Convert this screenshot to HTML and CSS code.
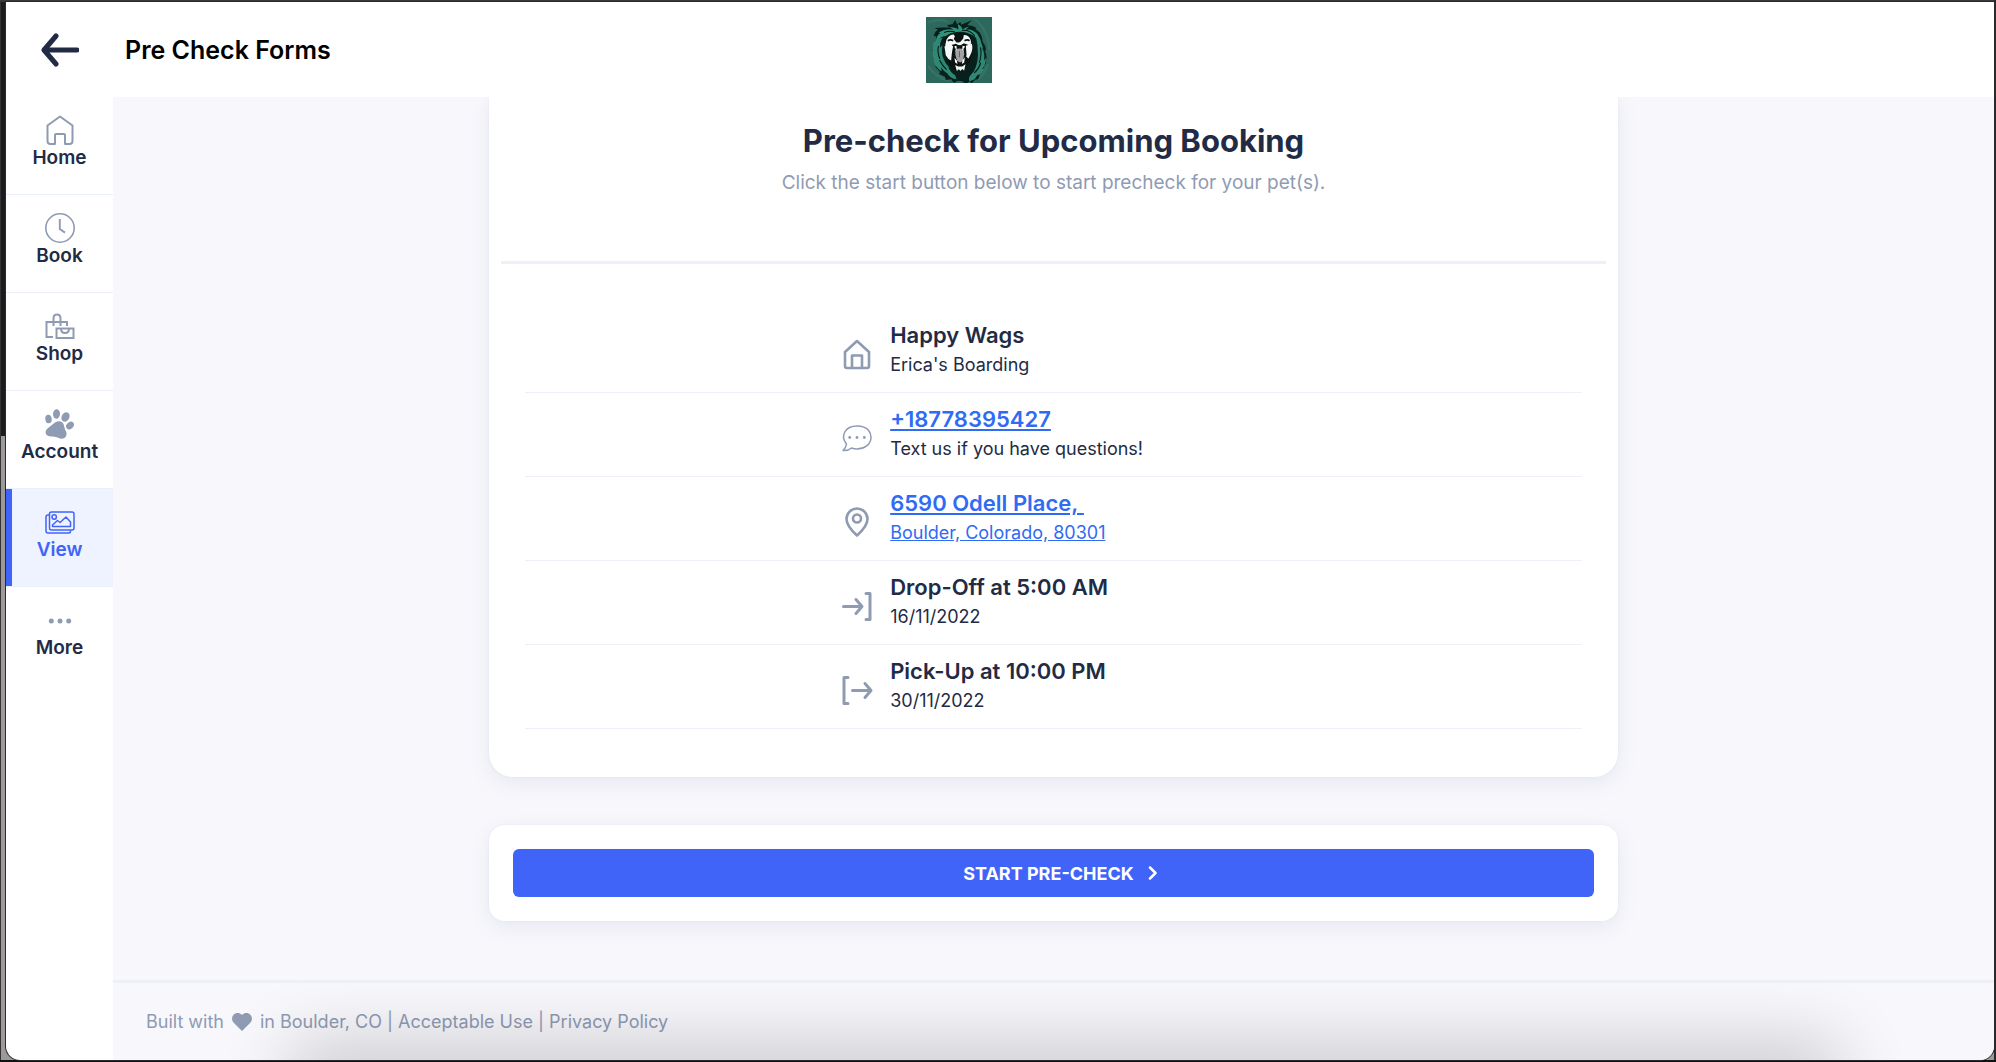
FILE: index.html
```html
<!DOCTYPE html>
<html lang="en">
  <head>
    <meta charset="UTF-8" />
    <meta name="viewport" content="width=device-width, initial-scale=1.0" />
    <title>Pre Check Forms</title>
    <link rel="stylesheet" href="styles.css">
  </head>
  <body>
    <div class="window">
      <header class="topbar">
        <div class="topbar-left">
          <button type="button" class="back" aria-label="Back">
            <svg width="38" height="34" viewBox="0 0 38 34">
              <path d="M36 17H3M15 3L3 17l12 14" fill="none" stroke="currentColor" stroke-width="5" stroke-linecap="round" stroke-linejoin="round" />
            </svg>
          </button>
          <h1>Pre Check Forms</h1>
        </div>
        <svg class="logo" viewBox="3 4 197 197" role="img" aria-label="Lion logo">
          <rect x="3" y="4" width="197" height="197" fill="#2c685c" />
          <path d="M10 20q40-14 60 0M150 12q38 30 42 90M10 150q20 34 60 44M188 145q-10 30-30 46" fill="none" stroke="#3c7b6d" stroke-width="7" opacity=".6" />
          <!-- mane -->
          <path d="M33 62l-7-2 4-10 8-9-10-4 24-2 20 0-6-7 16-2 8-13 6 13 10-7 2 8q16-6 32-13l-14 14 16 3 12 6-4 2 14 12 6 14 2 12 8 14 2 12-3 2 5 16-3 24-5 4-3 18-8 4-6 18-9 2-12 12-4-8-12 10-10-9-14-2-12 6-8-10-16 2-2-10-18-8 3-6-15-16 5-2-12-24 6 0-7-26 7 1-2-16 7 2z" fill="#08201c" />
          <path d="M40 50q24-14 46-8l-14-8q20 0 28 8l-2-16q12 6 14 16 6-8 20-10-8 6-10 10 18-4 34 12 10 14 14 34-10-18-22-26-20-14-42-14-26 0-42 12-22 2-32 24 0-24 14-32z" fill="#2f927c" />
          <path d="M32 78q6-10 20-12-8 14-8 30l8-8q-4 26 4 42 4 12 14 22l6 24q-16-4-28-22l2 12q-16-8-24-30-6-26 0-58zM68 152q8 18 22 26l4 12q-18-2-28-18z" fill="#2f8875" />
          <path d="M152 62q16 14 22 36l-4-4q10 20 6 40l6-8q0 20-12 34l8-2q-8 18-22 20l-8 12-14 6q-6-6 0-16l12-14q12-22 12-50 0-30-6-54z" fill="#2f8875" />
          <path d="M40 92q-4 18 4 36M44 134q8 16 20 26M166 96q4 20-4 44M166 142q-6 18-18 28M58 50q14-6 30-2M112 44q22-2 36 16" fill="none" stroke="#06100e" stroke-width="3" stroke-linecap="round" />
          <!-- face -->
          <path d="M60 66q10-14 28-14h28q20 2 24 18l2 42-8 24-14 22-14 6H92l-14-10-14-26-6-28z" fill="#0a1412" />
          <path d="M64 72q8-16 22-16l6 12 8 10h6l8-10 2-10q16 0 20 14l2 10-6 6-16-6-12 8-12-6-16 4-16 2zM58 92l18-8 8 8-4 22-2 20q-10-4-16-16l-2-14zM122 90l18-6q4 18-4 32l-6 12-8-6z" fill="#f6f8f7" />
          <path d="M68 75q8-5 16 0M118 75q8-5 15 0" fill="none" stroke="#0a1412" stroke-width="5" />
          <path d="M88 64h19l4 6-9 10h-8l-8-10z" fill="#0a1412" />
          <path d="M84 92q18-8 38 0l2 24-4 24-12 12H94l-8-16-4-26z" fill="#0a1412" />
          <path d="M90 102q12-7 26-1l1 14-4 20-8 5-9-5-5-16z" fill="#a4a1a6" />
          <path d="M103 106v18" stroke="#4a3f43" stroke-width="2" />
          <path d="M87 92l7-2 1 15zM120 92l-8-2-1 15zM88 126l7 8 2 10-7-4zM119 124l-7 9-2 11 7-4z" fill="#fff" />
          <path d="M90 147l9 5h12l10-7-4 19-6-5-5 6-5-5-6 5z" fill="#f0f5f3" />
        </svg>
      </header>

      <div class="layout">
        <nav class="sidebar">
          <a href="#" class="nav-item">
            <svg class="icon" viewBox="0 0 30 30">
              <path d="M15 1.500L27.500 10.500V26q0 3-3 3H20V20q0-1-1-1H11q-1 0-1 1v9H5.500q-3 0-3-3V10.500z" fill="none" stroke="currentColor" stroke-width="2" stroke-linejoin="round" />
            </svg>
            <span>Home</span>
          </a>
          <a href="#" class="nav-item">
            <svg class="icon" viewBox="0 0 30 30">
              <g fill="none" stroke="currentColor" stroke-width="1.600">
                <circle cx="15" cy="15" r="14.200" />
                <path d="M14.800 6v10l5.200 3.600" stroke-width="1.900" />
              </g>
            </svg>
            <span>Book</span>
          </a>
          <a href="#" class="nav-item">
            <svg class="icon" viewBox="0 0 30 30">
              <g fill="none" stroke="currentColor" stroke-width="2">
                <path d="M8 26H1.500V11H22v4M8.500 15V7.500q0-4 3.500-4t3.500 4V15" />
                <path d="M11.500 17.500h17V27h-17zM16 17.500q0 4.500 4 4.500t4-4.500" />
              </g>
            </svg>
            <span>Shop</span>
          </a>
          <a href="#" class="nav-item">
            <svg class="icon" viewBox="0 0 30 30">
              <g fill="currentColor">
                <ellipse cx="3.500" cy="10" rx="3.200" ry="4.300" transform="rotate(-8 3.500 10)" />
                <ellipse cx="11.500" cy="5" rx="3.500" ry="4.700" transform="rotate(4 11.500 5)" />
                <ellipse cx="20.500" cy="8" rx="3.800" ry="5" transform="rotate(30 20.500 8)" />
                <ellipse cx="25" cy="16.500" rx="3.300" ry="4.300" transform="rotate(48 25 16.500)" />
                <path d="M10 13.500C13 11.500 17 11.500 18.500 15c1 3 1 4.500 2.500 7.500 2 4-1.500 8.500-6 7-3.500-1.500-5.500-2-9-2C1 27.500-1 23 2 20c2-2 5-4 8-6.500z" />
              </g>
            </svg>
            <span>Account</span>
          </a>
          <a href="#" class="nav-item active">
            <svg class="icon" viewBox="0 0 30 30">
              <g fill="none" stroke="currentColor" stroke-width="1.500" stroke-linejoin="round">
                <rect x="4.500" y="5" width="24.500" height="18" rx="2" />
                <path d="M4.500 8H3Q1 8 1 10V24Q1 26 3 26H24Q25.500 26 25.500 23.500" />
                <circle cx="9.200" cy="10" r="2.200" />
                <path d="M7.500 19.500V18l5-4.500 2.500 2 6-5.500 4.500 5v4.500z" />
              </g>
            </svg>
            <span>View</span>
          </a>
          <a href="#" class="nav-item">
            <svg class="icon" viewBox="0 0 30 30">
              <g fill="currentColor">
                <circle cx="6.300" cy="16" r="2.500" />
                <circle cx="15" cy="16" r="2.500" />
                <circle cx="23.700" cy="16" r="2.500" />
              </g>
            </svg>
            <span>More</span>
          </a>
        </nav>

        <div class="content">
          <main>
            <section class="card booking">
              <div class="intro">
                <h2>Pre-check for Upcoming Booking</h2>
                <p>Click the start button below to start precheck for your pet(s).</p>
              </div>
              <ul class="details">
                <li>
                  <svg class="icon" viewBox="0 0 30 30">
                    <path d="M15 2L27 13V27q0 2-2 2H5q-2 0-2-2V13zM10 29V16.500h10V29" fill="none" stroke="currentColor" stroke-width="2.600" stroke-linejoin="round" />
                  </svg>
                  <div>
                    <strong>Happy Wags</strong>
                    <span>Erica's Boarding</span>
                  </div>
                </li>
                <li>
                  <svg class="icon" viewBox="0 0 30 30">
                    <path d="M4.500 21C-2 13 3 3 15 3s14 7.500 14 11.500c0 7-7 11.500-14 11.500-2.500 0-4-.4-5.500-1Q6 28 1 27.500q3-2.500 3.500-6.500z" fill="none" stroke="currentColor" stroke-width="1.500" stroke-linejoin="round" />
                    <g fill="currentColor">
                      <circle cx="7.700" cy="14.500" r="1.400" />
                      <circle cx="15" cy="14.500" r="1.400" />
                      <circle cx="22.300" cy="14.500" r="1.400" />
                    </g>
                  </svg>
                  <div>
                    <strong><a href="tel:+18778395427">+18778395427</a></strong>
                    <span>Text us if you have questions!</span>
                  </div>
                </li>
                <li>
                  <svg class="icon" viewBox="0 0 30 30">
                    <g fill="none" stroke="currentColor" stroke-width="2.600" stroke-linejoin="round">
                      <path d="M15 28.500C10 24 4.500 18.500 4.500 12a10.500 10.500 0 0 1 21 0C25.500 18.500 20 24 15 28.500z" />
                      <circle cx="15" cy="11.500" r="4" />
                    </g>
                  </svg>
                  <div>
                    <strong><a href="#">6590 Odell Place,&nbsp;</a></strong>
                    <span><a href="#">Boulder, Colorado, 80301</a></span>
                  </div>
                </li>
                <li>
                  <svg class="icon" viewBox="0 0 30 30">
                    <path d="M1.500 15.500H19M14 8.500l6 7-6 7M24 2.500h4v26h-4" fill="none" stroke="currentColor" stroke-width="3" stroke-linecap="round" stroke-linejoin="round" />
                  </svg>
                  <div>
                    <strong>Drop-Off at 5:00 AM</strong>
                    <span>16/11/2022</span>
                  </div>
                </li>
                <li>
                  <svg class="icon" viewBox="0 0 30 30">
                    <path d="M10.500 15.500H28M23 8.500l6 7-6 7M6 2.500H2v26h4" fill="none" stroke="currentColor" stroke-width="3" stroke-linecap="round" stroke-linejoin="round" />
                  </svg>
                  <div>
                    <strong>Pick-Up at 10:00 PM</strong>
                    <span>30/11/2022</span>
                  </div>
                </li>
              </ul>
            </section>

            <section class="card action">
              <button type="button" class="start">
                START PRE-CHECK
                <svg width="10" height="14" viewBox="0 0 10 14">
                  <path d="M2 1.500L7.500 7 2 12.500" fill="none" stroke="currentColor" stroke-width="2.500" stroke-linecap="round" stroke-linejoin="round" />
                </svg>
              </button>
            </section>
          </main>

          <footer>
            <span>Built with</span>
            <svg class="heart" viewBox="0 0 20 18">
              <path d="M10 18L1.500 9.500C-3 4 4-3.500 10 2c6-5.500 13 2 8.500 7.500z" fill="currentColor" />
            </svg>
            <span>in Boulder, CO | <a href="#">Acceptable Use</a> | <a href="#">Privacy Policy</a></span>
          </footer>
        </div>
      </div>
    </div>
  </body>
</html>
```
FILE: styles.css
```css
* {
  box-sizing: border-box;
}
body {
  display: flex;
  min-height: 100vh;
  margin: 0;
  padding: 2px 2px 2px 6px;
  background: linear-gradient(#1c1c1e 436px, #9c9998 436px);
  box-shadow: inset 0 -2px #111, inset -2px 0 #2a2a2c, inset 0 2px #3a3a3c, inset 1px 0 #333;
  color: #222b45;
  font-family: Inter, "Liberation Sans", sans-serif;
}
h1,
h2,
p,
ul {
  margin: 0;
  padding: 0;
}
a {
  color: inherit;
}
.window {
  position: relative;
  display: flex;
  flex-direction: column;
  flex: 1;
  overflow: hidden;
  background-color: #fff;
  border-radius: 0 0 14px 14px;
  box-shadow: 0 0 0 1px #2a2a2c;
}
/* soft shadow coming up from the dock */
.window::after {
  content: "";
  position: absolute;
  left: 300px;
  right: 170px;
  bottom: -30px;
  height: 30px;
  box-shadow: 0 0 70px 16px rgba(0, 0, 0, 0.2);
  pointer-events: none;
}
.topbar {
  display: grid;
  grid-template-columns: 1fr auto 1fr;
  align-items: center;
  height: 95px;
  padding-right: 82px;
}
.topbar-left {
  display: flex;
  align-items: center;
}
.back {
  display: flex;
  justify-content: center;
  width: 107px;
  padding: 0;
  border: none;
  background: none;
  color: #222b45;
  cursor: pointer;
}
.topbar h1 {
  padding-left: 12px;
  color: #000;
  font-size: 25px;
  font-weight: 600;
}
.logo {
  width: 66px;
  height: 66px;
}
.icon {
  flex: none;
  width: 30px;
  height: 30px;
  overflow: visible;
  color: #8f9bb3;
}
.layout {
  display: flex;
  flex: 1;
}
.sidebar {
  flex: none;
  width: 107px;
}
.nav-item {
  display: flex;
  flex-direction: column;
  align-items: center;
  height: 98px;
  padding-top: 18px;
  border-bottom: 1px solid #e9eef7;
  font-size: 19px;
  font-weight: 600;
  line-height: 26px;
  text-decoration: none;
}
.nav-item:last-child {
  border-bottom: none;
}
.nav-item.active,
.nav-item.active .icon {
  color: #4064f7;
}
.nav-item.active {
  background-color: #eff2ff;
  box-shadow: inset 6px 0 #4064f7;
}
.content {
  display: flex;
  flex-direction: column;
  flex: 1;
  overflow: hidden;
  background-color: #f7f7fc;
}
main {
  display: flex;
  flex-direction: column;
  flex: 1;
  gap: 48px;
  width: 60%;
  margin: 0 auto;
  padding-bottom: 48px;
}
.card {
  background-color: #fff;
  border-radius: 16px;
  box-shadow: 0 6px 20px rgba(143, 155, 179, 0.14), 0 0 3px rgba(143, 155, 179, 0.1);
}
.booking {
  padding: 0 12px 48px;
  border-radius: 0 0 24px 24px;
}
.intro {
  padding: 24px 0 64px;
  border-bottom: 3px solid #edf1f7;
  text-align: center;
}
.intro h2 {
  font-size: 31px;
  font-weight: 700;
  line-height: 40px;
}
.intro p {
  padding-top: 8px;
  color: #8f9bb3;
  font-size: 19px;
  line-height: 28px;
}
.details {
  margin: 45px 24px 0;
  list-style: none;
}
.details li {
  display: flex;
  align-items: flex-end;
  gap: 18px;
  height: 84px;
  padding: 0 0 13px 30%;
  border-bottom: 1px solid #edf1f7;
}
.details .icon {
  margin-bottom: 10px;
}
.details strong,
.details span {
  display: block;
}
.details strong {
  font-size: 22px;
  font-weight: 600;
  line-height: 32px;
}
.details span {
  font-size: 18px;
  line-height: 28px;
}
.details a {
  color: #2f6bf3;
}
.action {
  padding: 24px;
}
.start {
  display: flex;
  align-items: center;
  justify-content: center;
  gap: 14px;
  width: 100%;
  height: 48px;
  padding: 0 0 0 14px;
  border: none;
  border-radius: 6px;
  background-color: #4064f7;
  color: #fff;
  font-family: inherit;
  font-size: 18px;
  font-weight: 700;
  cursor: pointer;
}
footer {
  display: flex;
  align-items: center;
  gap: 8px;
  height: 80px;
  padding-left: 33px;
  border-top: 3px solid #edf1f7;
  color: #8f9bb3;
  font-size: 18px;
}
footer a {
  text-decoration: none;
}
.heart {
  width: 20px;
  height: 18px;
}
```
